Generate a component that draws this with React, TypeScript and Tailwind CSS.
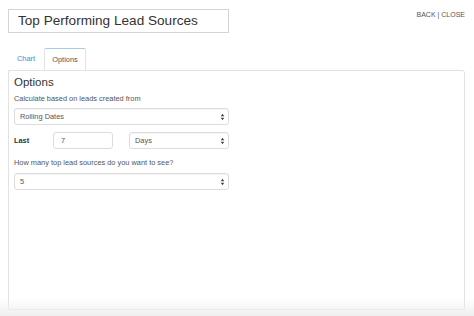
function SelectBox({ value, className }: { value: string; className?: string }) {
    return (
        <div
            className={`flex h-[17px] items-center justify-between rounded-[3px] border border-[#dcdcdc] bg-white pl-[5px] pr-[3px] text-[7.4px] text-[#555] shadow-[inset_0_1px_1px_rgba(0,0,0,0.04)] ${className ?? ''}`}
        >
            <span>{value}</span>
            <svg width="5" height="8" viewBox="0 0 5 8" className="text-[#444]">
                <path d="M2.5 0.8 L4.3 3.2 H0.7 Z" fill="currentColor" />
                <path d="M2.5 7.2 L4.3 4.8 H0.7 Z" fill="currentColor" />
            </svg>
        </div>
    );
}

export default function App() {
    return (
        <div className="relative h-[316px] w-[474px] overflow-hidden bg-white font-['Liberation_Sans',Arial,sans-serif] text-[#333]">
            {/* Header */}
            <div className="flex items-start justify-between pl-[8px] pr-[9px] pt-[9px]">
                <div className="flex h-[24px] w-[221px] items-center whitespace-nowrap border border-[#d4d4d4] pl-[9px] text-[13.6px] text-[#333]">
                    Top Performing Lead Sources
                </div>
                <div className="pt-[1px] text-[7px] text-[#555]">BACK | CLOSE</div>
            </div>

            {/* Tabs */}
            <div className="mt-[15px] flex pl-[8px] text-[7.4px]">
                <div className="flex h-[22px] w-[36px] items-center justify-center text-[#3c8dcc]">Chart</div>
                <div className="relative z-10 -mb-px flex h-[22px] w-[42px] items-center justify-center rounded-t-[2px] border border-b-0 border-[#e2e2e2] border-t-[#a9cbe6] bg-white text-[#555]">
                    Options
                </div>
            </div>

            {/* Panel */}
            <div className="ml-[8px] mr-[9px] h-[240px] rounded-tr-[3px] border border-[#e2e2e2] px-[5px] pt-[4px]">
                <div className="text-[11.5px] leading-[14px] text-[#333]">Options</div>
                <div className="mt-[5px] text-[7.4px] leading-[10px] text-[#555]">Calculate based on leads created from</div>
                <SelectBox value="Rolling Dates" className="mt-[4px] w-[215px]" />

                <div className="mt-[7px] flex w-[215px] items-center">
                    <div className="w-[39px] text-[7.4px] font-bold text-[#333]">Last</div>
                    <div className="flex h-[17px] w-[60px] items-center rounded-[3px] border border-[#dcdcdc] pl-[7px] text-[7.4px] text-[#555]">
                        7
                    </div>
                    <SelectBox value="Days" className="ml-[16px] flex-1" />
                </div>

                <div className="mt-[9px] text-[7.4px] leading-[10px] text-[#555]">How many top lead sources do you want to see?</div>
                <SelectBox value="5" className="mt-[5px] w-[215px]" />
            </div>

            {/* bottom fade */}
            <div className="pointer-events-none absolute bottom-0 left-0 right-0 h-[18px] bg-gradient-to-b from-transparent to-[#efefef]" />
        </div>
    );
}
